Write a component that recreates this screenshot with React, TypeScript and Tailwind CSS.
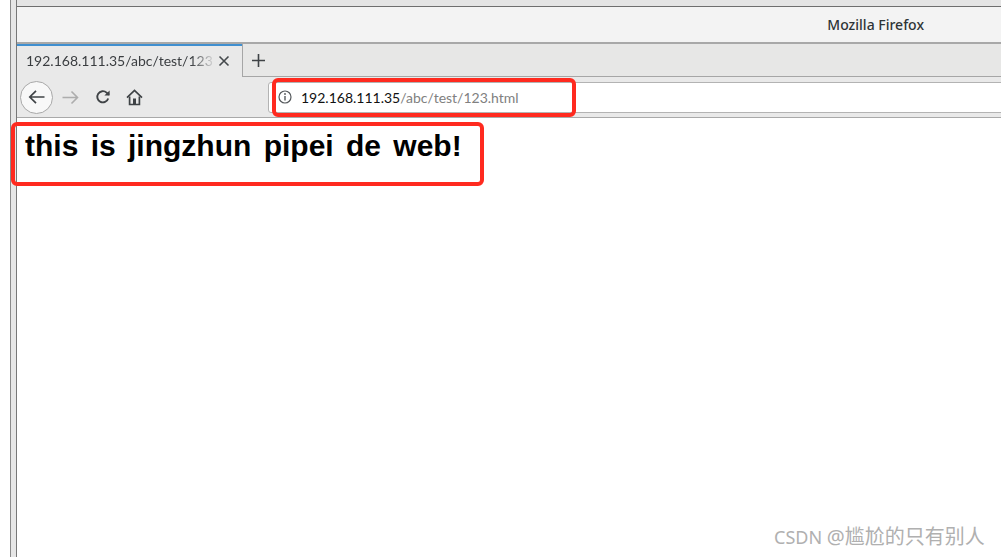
import React from "react";

const Red = ({ className }: { className: string }) => (
  <div className={"absolute border-[4px] border-[#ff2a1f] rounded-[6px] " + className} />
);

export default function App() {
  return (
    <div className="relative w-[1001px] h-[557px] overflow-hidden bg-white flex font-['Open_Sans',sans-serif]">
      <div className="w-[10px] h-full bg-white border-r border-[#8a8a8a] box-content" />
      <div className="w-[5px] h-full bg-[#e6e6e6]" />
      <div className="flex-1 min-w-0 flex flex-col border-l border-[#777777]">
        <div className="h-[6px] bg-[#e4e4e4] border-b border-[#6e6e6e] box-content" />
        <div className="h-[35px] bg-[#f3f3f3] flex items-center justify-end pr-[77px] text-[14px] font-medium text-[#2e3436] font-['Noto_Sans',sans-serif]">
          Mozilla Firefox
        </div>
        <div className="h-[2px] bg-[#a8a8a8]" />
        <div className="h-[33px] bg-[#e7e7e6] flex border-b border-[#a6a6a6]">
          <div className="w-[225px] bg-[#e9e9e9] border-t-2 border-[#3f8fd0] flex items-center pl-[9px] pr-[12px] pb-[2px] text-[14px] text-[#3a3d40] font-['Lato',sans-serif] -mb-px">
            <span className="flex-1 whitespace-nowrap [mask-image:linear-gradient(to_right,black_165px,transparent_190px)]">192.168.111.35/abc/test/123</span>
            <svg width="12" height="12" viewBox="0 0 12 12">
              <path d="M1.5 1.5 L10.5 10.5 M10.5 1.5 L1.5 10.5" stroke="#45494c" strokeWidth="1.6" fill="none" />
            </svg>
          </div>
          <div className="w-[32px] border-l border-[#a6a6a6] flex items-center justify-center">
            <svg width="13" height="13" viewBox="0 0 13 13">
              <path d="M6.5 0 V13 M0 6.5 H13" stroke="#3f4346" strokeWidth="1.6" fill="none" />
            </svg>
          </div>
        </div>
        <div className="h-[40px] bg-[#e9e9e9] flex items-center pl-[3px] border-b border-[#a9a9a9] box-content">
          <div className="w-[33px] h-[33px] rounded-full bg-[#f8f8f8] border border-[#a8a8a8] flex items-center justify-center">
            <svg width="18" height="16" viewBox="0 0 18 16">
              <path d="M16.5 8 H2 M8 1.8 L1.8 8 L8 14.2" stroke="#3f4346" strokeWidth="1.7" fill="none" />
            </svg>
          </div>
          <svg width="17" height="15" viewBox="0 0 17 15" className="ml-[9px]">
            <path d="M0.5 7.5 H15.5 M9.5 1.5 L15.5 7.5 L9.5 13.5" stroke="#adadad" strokeWidth="1.6" fill="none" />
          </svg>
          <svg width="16" height="16" viewBox="0 0 16 16" className="ml-[16px]">
            <path d="M13.2 9.5 A5.6 5.6 0 1 1 11.6 3.6 L14 5.8" stroke="#3f4346" strokeWidth="1.9" fill="none" />
            <path d="M14.6 1.4 V6.6 H9.4 Z" fill="#3f4346" />
          </svg>
          <svg width="17" height="17" viewBox="0 0 17 17" className="ml-[15px]">
            <path d="M1 8.6 L8.5 1.5 L16 8.6" stroke="#3f4346" strokeWidth="1.7" fill="none" />
            <path d="M3.6 7.6 V15.5 H13.4 V7.6" stroke="#3f4346" strokeWidth="1.7" fill="none" />
            <rect x="7" y="9.5" width="3" height="6" fill="#3f4346" />
          </svg>
          <div className="ml-[125px] flex-1 h-[31px] -mr-px bg-white border border-[#b3b3b3] rounded-l-[3px] flex items-center pl-[9px] text-[14px] font-['Lato',sans-serif] whitespace-nowrap">
            <svg width="14" height="14" viewBox="0 0 14 14">
              <circle cx="7" cy="7" r="6" stroke="#55595c" strokeWidth="1.2" fill="none" />
              <path d="M7 6 V10.4" stroke="#55595c" strokeWidth="1.4" />
              <circle cx="7" cy="4" r="0.9" fill="#55595c" />
            </svg>
            <span className="ml-[9px] text-[#111111]">192.168.111.35</span>
            <span className="text-[#808080]">/abc/test/123.html</span>
          </div>
        </div>
        <div className="flex-1 bg-white pl-[8px] pt-[10px]">
          <h1 className="text-[30px] leading-[36px] font-bold text-black font-['Liberation_Sans',sans-serif] whitespace-nowrap [word-spacing:4px]">
            this is jingzhun pipei de web!
          </h1>
        </div>
      </div>
      <Red className="left-[272px] top-[78px] w-[304px] h-[39px]" />
      <Red className="left-[11px] top-[122px] w-[473px] h-[64px]" />
      <div className="absolute left-[774px] top-[525px] text-[18px] leading-[24px] text-[#b0b0b0] whitespace-nowrap font-['Noto_Sans','Noto_Sans_CJK_SC',sans-serif]">
        CSDN <span className="text-[20px]">@尴尬的只有别人</span>
      </div>
    </div>
  );
}
